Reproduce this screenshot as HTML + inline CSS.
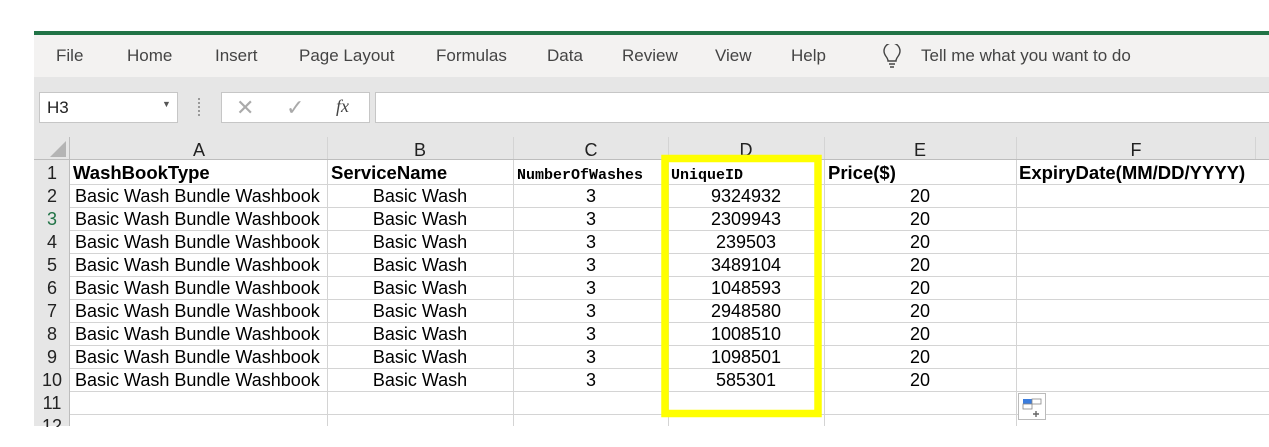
<!DOCTYPE html>
<html><head><style>
body{margin:0;width:1269px;height:447px;background:#fff;position:relative;overflow:hidden;font-family:"Liberation Sans",sans-serif}
.a{position:absolute}
.rib{left:34px;top:31px;width:1235px;height:4px;background:#217346}
.rb{left:34px;top:35px;width:1235px;height:42px;background:#f3f2f1}
.rb span{position:absolute;top:11px;font-size:17px;color:#444}
.fb{left:34px;top:77px;width:1235px;height:60px;background:#e6e6e6}
.box{background:#fff;border:1px solid #c6c6c6;box-sizing:border-box}
</style></head><body>
<div class="a rib"></div>
<div class="a rb">
<span style="left:22px">File</span><span style="left:93px">Home</span><span style="left:181px">Insert</span><span style="left:265px">Page Layout</span><span style="left:402px">Formulas</span><span style="left:513px">Data</span><span style="left:588px">Review</span><span style="left:681px">View</span><span style="left:757px">Help</span>
<svg style="position:absolute;left:848px;top:9px" width="20" height="26" viewBox="0 0 20 26"><path d="M6 17c0-4-4-5-4-10a8 8 0 0 1 16 0c0 5-4 6-4 10z" fill="none" stroke="#444" stroke-width="1.4"/><path d="M7 20h6M8 23h4" stroke="#444" stroke-width="1.4"/></svg>
<span style="left:887px">Tell me what you want to do</span>
</div>
<div class="a fb"></div>
<div class="a box" style="left:39px;top:92px;width:139px;height:31px"><span class="a" style="left:7px;top:5px;font-size:17px;color:#222">H3</span><span class="a" style="left:122px;top:6px;font-size:9px;color:#555">▼</span></div>
<div class="a" style="left:198px;top:98px;width:2px;height:18px;border-left:2px dotted #999"></div>
<div class="a box" style="left:221px;top:92px;width:149px;height:31px">
<span class="a" style="left:14px;top:2px;font-size:22px;color:#aaa">✕</span><span class="a" style="left:64px;top:2px;font-size:22px;color:#aaa">✓</span><span class="a" style="left:114px;top:3px;font-size:18px;font-style:italic;font-family:'Liberation Serif',serif;color:#444">fx</span></div>
<div class="a box" style="left:375px;top:92px;width:894px;height:31px;border-right:none"></div>
<svg class="a" style="left:0;top:137px" width="1269" height="290">
<rect x="34" y="0" width="1235" height="23" fill="#e6e6e6"/>
<rect x="34" y="0" width="36" height="289" fill="#e6e6e6"/>
<rect x="70" y="23" width="1199" height="266" fill="#fff"/>
<path d="M66 4L66 20L50 20Z" fill="#b4b4b4"/>
<g stroke="#d4d4d4" stroke-width="1">
<line x1="70" y1="47.5" x2="1269" y2="47.5"/><line x1="70" y1="70.5" x2="1269" y2="70.5"/><line x1="70" y1="93.5" x2="1269" y2="93.5"/><line x1="70" y1="116.5" x2="1269" y2="116.5"/><line x1="70" y1="139.5" x2="1269" y2="139.5"/><line x1="70" y1="162.5" x2="1269" y2="162.5"/><line x1="70" y1="185.5" x2="1269" y2="185.5"/><line x1="70" y1="208.5" x2="1269" y2="208.5"/><line x1="70" y1="231.5" x2="1269" y2="231.5"/><line x1="70" y1="254.5" x2="1269" y2="254.5"/><line x1="70" y1="277.5" x2="1269" y2="277.5"/>
<line x1="327.5" y1="0" x2="327.5" y2="289"/><line x1="513.5" y1="0" x2="513.5" y2="289"/><line x1="668.5" y1="0" x2="668.5" y2="289"/><line x1="824.5" y1="0" x2="824.5" y2="289"/><line x1="1016.5" y1="0" x2="1016.5" y2="289"/><line x1="1255.5" y1="0" x2="1255.5" y2="23"/>
</g>
<line x1="34" y1="22.5" x2="1269" y2="22.5" stroke="#bdbdbd"/>
<line x1="69.5" y1="0" x2="69.5" y2="289" stroke="#bdbdbd"/>
<g font-family="Liberation Sans" font-size="18" text-anchor="middle" fill="#222">
<text x="199" y="19">A</text><text x="420" y="19">B</text><text x="591" y="19">C</text><text x="746" y="19">D</text><text x="920" y="19">E</text><text x="1136" y="19">F</text>
<text x="52" y="42">1</text><text x="52" y="65">2</text><text x="52" y="88" fill="#217346">3</text><text x="52" y="111">4</text><text x="52" y="134">5</text><text x="52" y="157">6</text><text x="52" y="180">7</text><text x="52" y="203">8</text><text x="52" y="226">9</text><text x="52" y="249">10</text><text x="52" y="272">11</text><text x="52" y="295">12</text>
</g>
<g font-family="Liberation Sans" font-size="18.5" font-weight="bold" fill="#000">
<text x="73" y="42">WashBookType</text><text x="331" y="42">ServiceName</text><text x="828" y="42">Price($)</text><text x="1019" y="42">ExpiryDate(MM/DD/YYYY)</text>
</g>
<g font-family="Liberation Mono" font-size="15" font-weight="bold" fill="#000">
<text x="517" y="42">NumberOfWashes</text><text x="671" y="42">UniqueID</text>
</g>
<g font-family="Liberation Sans" font-size="18" fill="#000">
<text x="75" y="65">Basic Wash Bundle Washbook</text><text x="75" y="88">Basic Wash Bundle Washbook</text><text x="75" y="111">Basic Wash Bundle Washbook</text><text x="75" y="134">Basic Wash Bundle Washbook</text><text x="75" y="157">Basic Wash Bundle Washbook</text><text x="75" y="180">Basic Wash Bundle Washbook</text><text x="75" y="203">Basic Wash Bundle Washbook</text><text x="75" y="226">Basic Wash Bundle Washbook</text><text x="75" y="249">Basic Wash Bundle Washbook</text>
</g>
<g font-family="Liberation Sans" font-size="18" fill="#000" text-anchor="middle">
<text x="420" y="65">Basic Wash</text><text x="420" y="88">Basic Wash</text><text x="420" y="111">Basic Wash</text><text x="420" y="134">Basic Wash</text><text x="420" y="157">Basic Wash</text><text x="420" y="180">Basic Wash</text><text x="420" y="203">Basic Wash</text><text x="420" y="226">Basic Wash</text><text x="420" y="249">Basic Wash</text>
<text x="591" y="65">3</text><text x="591" y="88">3</text><text x="591" y="111">3</text><text x="591" y="134">3</text><text x="591" y="157">3</text><text x="591" y="180">3</text><text x="591" y="203">3</text><text x="591" y="226">3</text><text x="591" y="249">3</text>
<text x="746" y="65">9324932</text><text x="746" y="88">2309943</text><text x="746" y="111">239503</text><text x="746" y="134">3489104</text><text x="746" y="157">1048593</text><text x="746" y="180">2948580</text><text x="746" y="203">1008510</text><text x="746" y="226">1098501</text><text x="746" y="249">585301</text>
<text x="920" y="65">20</text><text x="920" y="88">20</text><text x="920" y="111">20</text><text x="920" y="134">20</text><text x="920" y="157">20</text><text x="920" y="180">20</text><text x="920" y="203">20</text><text x="920" y="226">20</text><text x="920" y="249">20</text>
</g>
<rect x="665" y="21.5" width="153" height="255" fill="none" stroke="#ffff00" stroke-width="7.5"/>
<rect x="1018.5" y="256.5" width="27" height="26" fill="#fff" stroke="#bbb"/>
<rect x="1023" y="262" width="9" height="5" fill="#3b7ddd"/><rect x="1032" y="262" width="9" height="5" fill="none" stroke="#888" stroke-width=".8"/>
<rect x="1023" y="267" width="9" height="5" fill="none" stroke="#888" stroke-width=".8"/>
<path d="M1036 274v6M1033 277h6" stroke="#666" stroke-width="1.4"/>
</svg>
</body></html>
